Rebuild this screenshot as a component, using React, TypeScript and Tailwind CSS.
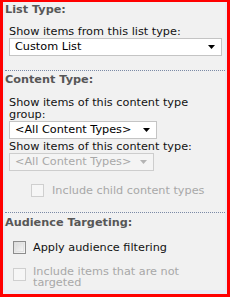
import React from "react";

const font = { fontFamily: '"DejaVu Sans", Verdana, sans-serif' };

function Arrow({ disabled }: { disabled?: boolean }) {
  return (
    <svg width="7" height="4" viewBox="0 0 7 4" className="shrink-0">
      <polygon points="0,0 7,0 3.5,4" fill={disabled ? "#b4b4b4" : "#000"} />
    </svg>
  );
}

function Select({ text, w, disabled }: { text: string; w: string; disabled?: boolean }) {
  return (
    <div
      className={`flex h-[18px] items-center justify-between pl-[5px] pr-[6px] border ${w} ${
        disabled ? "bg-[#f4f4f4] border-[#cdcdcd] text-[#a8a8a8]" : "bg-white border-[#c4c4c4] text-black"
      }`}
    >
      <span className="leading-[14px] whitespace-nowrap">{text}</span>
      <Arrow disabled={disabled} />
    </div>
  );
}

function Check({ disabled }: { disabled?: boolean }) {
  return (
    <div
      className={`w-[13px] h-[13px] shrink-0 border ${
        disabled ? "border-[#cfcfcf] bg-[#f6f6f6]" : "border-[#8d8d8d] bg-gradient-to-br from-[#d9d9d9] to-[#f8f8f8]"
      }`}
    >
      {!disabled && <div className="m-[1px] w-[9px] h-[9px] border border-[#e2e2e2] bg-gradient-to-br from-[#dcdcdc] to-[#f4f4f4]" />}
    </div>
  );
}

function Sep() {
  return <div className="h-0 border-t border-dotted border-[#7b8aa6]" />;
}

export default function App() {
  return (
    <div className="w-[230px] h-[297px] border-l-[3px] border-r-[3px] border-t-[2px] border-b-[3px] border-[#ff0000] bg-[#f1f1f1]" style={font}>
      <div className="h-full border-l-2 border-r-2 border-b-4 border-[#eaeaf4] text-[11.25px]">
        {/* List Type */}
        <div className="pt-[1px] pb-[14px]">
          <div className="font-bold leading-[14px] text-[#575757]">List Type:</div>
          <div className="pl-[4px]">
            <div className="mt-[9px] leading-[12px] text-[#111]">Show items from this list type:</div>
            <Select text="Custom List" w="w-[213px]" />
          </div>
        </div>
        <Sep />
        {/* Content Type */}
        <div className="pt-[2px] pb-[15px]">
          <div className="font-bold leading-[14px] text-[#575757]">Content Type:</div>
          <div className="pl-[4px]">
            <div className="mt-[10px] leading-[12px] text-[#111]">Show items of this content type group:</div>
            <div className="mt-[0px]">
              <Select text="<All Content Types>" w="w-[148px]" />
            </div>
            <div className="mt-[2px] leading-[12px] text-[#111]">Show items of this content type:</div>
            <div className="mt-[0px]">
              <Select text="<All Content Types>" w="w-[145px]" disabled />
            </div>
            <div className="mt-[13px] ml-[22px] flex items-center gap-[8px]">
              <Check disabled />
              <span className="leading-[13px] text-[#a8a8a8]">Include child content types</span>
            </div>
          </div>
        </div>
        <Sep />
        {/* Audience */}
        <div className="pt-[3px]">
          <div className="font-bold leading-[14px] text-[#575757]">Audience Targeting:</div>
          <div className="pl-[8px]">
            <div className="mt-[11px] flex items-center gap-[7px]">
              <Check />
              <span className="leading-[13px] text-[#111]">Apply audience filtering</span>
            </div>
            <div className="mt-[12px] flex items-start gap-[7px]">
              <div className="mt-[2px]">
                <Check disabled />
              </div>
              <span className="leading-[11px] text-[#a8a8a8]">Include items that are not targeted</span>
            </div>
          </div>
        </div>
      </div>
    </div>
  );
}
